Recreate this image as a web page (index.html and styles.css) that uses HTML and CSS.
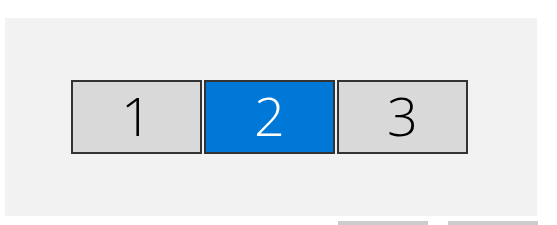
FILE: index.html
```html
<!DOCTYPE html>
<html lang="en">
<head>
  <meta charset="UTF-8" />
  <title>Display arrangement</title>
  <link rel="stylesheet" href="styles.css">
</head>
<body>
  <!-- Monitor layout -->
  <div class="arrange-panel">
    <div class="monitors">
      <div class="monitor">1</div>
      <div class="monitor selected">2</div>
      <div class="monitor">3</div>
    </div>
  </div>

  <!-- Buttons below (clipped) -->
  <div class="panel-actions">
    <div class="action-bar"></div>
    <div class="action-bar"></div>
  </div>
</body>
</html>
```

FILE: styles.css
```css
body {
  margin: 0;
  background: #fff;
  font-family: "Open Sans", "Noto Sans", sans-serif;
}
.arrange-panel {
  margin: 18px 0 0 5px;
  width: 532px;
  height: 198px;
  background: #f2f2f2;
  display: flex;
  align-items: center;
  padding-left: 66px;
  box-sizing: border-box;
}
.monitors {
  display: flex;
  gap: 2px;
}
.monitor {
  width: 131px;
  height: 74px;
  box-sizing: border-box;
  border: 2px solid #333;
  background: #d9d9d9;
  color: #000;
  font-size: 54px;
  font-weight: 300;
  display: flex;
  align-items: center;
  justify-content: center;
  line-height: 1;
  padding-bottom: 5px;
}
.monitor.selected {
  background: #0078d7;
  color: #fff;
}
.panel-actions {
  display: flex;
  gap: 20px;
  margin: 5px 0 0 338px;
}
.action-bar {
  width: 90px;
  height: 4px;
  background: #ccc;
}
```
